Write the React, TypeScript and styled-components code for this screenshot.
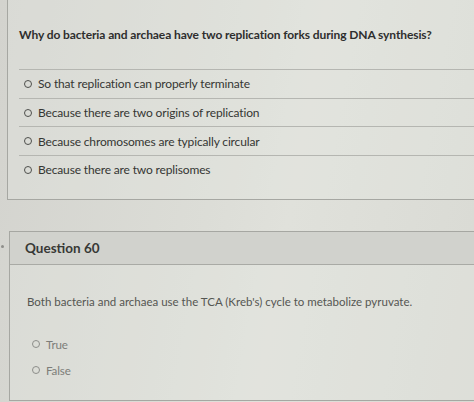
import React, { FC } from 'react';
import styled, { createGlobalStyle } from 'styled-components';

const GlobalStyle = createGlobalStyle`
  html, body {
    margin: 0;
    padding: 0;
    width: 474px;
    height: 402px;
    overflow: hidden;
    background: #d2d2cd;
    font-family: Lato, "Open Sans", Arial, sans-serif;
  }
`;

const Page = styled.div`
  position: relative;
  width: 474px;
  height: 402px;
  padding-left: 7px;
  box-sizing: border-box;
  overflow: hidden;
  background: linear-gradient(100deg, #d3d3ce 0%, #dcddd7 45%, #e0e1db 60%, #d9dad4 100%);
`;

const Card = styled.div<{ $top?: boolean }>`
  box-sizing: border-box;
  border: 1px solid #a6a7a2;
  border-right: none;
  ${({ $top }) => ($top ? 'border-top: none;' : '')}
  background: rgba(230, 231, 225, 0.35);
`;

const QuestionCard = styled(Card)`
  height: 200px;
  padding: 27px 0 0 11px;
`;

const QuestionText = styled.div`
  font-size: 12px;
  font-weight: 700;
  color: #2e2e2e;
  letter-spacing: -0.1px;
  margin-bottom: 27px;
`;

const OptionRow = styled.div`
  display: flex;
  align-items: center;
  gap: 6px;
  height: 28.7px;
  padding-left: 5px;
  border-top: 1px solid #b5b6b1;
  box-sizing: border-box;
`;

const Radio = styled.span<{ $muted?: boolean }>`
  width: 6px;
  height: 6px;
  border-radius: 50%;
  border: 1.5px solid ${({ $muted }) => ($muted ? '#8d8e8a' : '#4f504d')};
  flex-shrink: 0;
`;

const OptionLabel = styled.span<{ $muted?: boolean }>`
  font-size: ${({ $muted }) => ($muted ? 11.6 : 12)}px;
  color: ${({ $muted }) => ($muted ? '#7c7d79' : '#353633')};
  letter-spacing: -0.15px;
`;

const Spacer = styled.div`
  height: 31px;
`;

const SecondCard = styled(Card)`
  margin-left: 2px;
  height: 170px;
`;

const Header = styled.div`
  height: 33px;
  display: flex;
  align-items: center;
  padding-left: 15px;
  background: #d1d2cd;
  border-bottom: 1px solid #a9aaa5;
  box-sizing: border-box;
  font-size: 13.5px;
  font-weight: 700;
  color: #383936;
`;

const Body = styled.div`
  padding: 30px 0 0 17px;
`;

const Statement = styled.div`
  font-size: 11.5px;
  color: #555652;
  margin-bottom: 23px;
`;

const TFRow = styled.div`
  display: flex;
  align-items: center;
  gap: 6px;
  height: 26px;
  padding-left: 5px;
`;

const Dot = styled.span`
  position: absolute;
  left: 1px;
  top: 245px;
  width: 3px;
  height: 3px;
  border-radius: 50%;
  background: #8e8e8a;
`;

const options = [
  'So that replication can properly terminate',
  'Because there are two origins of replication',
  'Because chromosomes are typically circular',
  'Because there are two replisomes',
];

const App: FC = () => (
  <>
    <GlobalStyle />
    <Page>
      <QuestionCard $top>
        <QuestionText>Why do bacteria and archaea have two replication forks during DNA synthesis?</QuestionText>
        {options.map((o) => (
          <OptionRow key={o}>
            <Radio />
            <OptionLabel>{o}</OptionLabel>
          </OptionRow>
        ))}
      </QuestionCard>
      <Spacer />
      <SecondCard>
        <Header>Question 60</Header>
        <Body>
          <Statement>Both bacteria and archaea use the TCA (Kreb's) cycle to metabolize pyruvate.</Statement>
          {['True', 'False'].map((t) => (
            <TFRow key={t}>
              <Radio $muted />
              <OptionLabel $muted>{t}</OptionLabel>
            </TFRow>
          ))}
        </Body>
      </SecondCard>
      <Dot />
    </Page>
  </>
);

export default App;
